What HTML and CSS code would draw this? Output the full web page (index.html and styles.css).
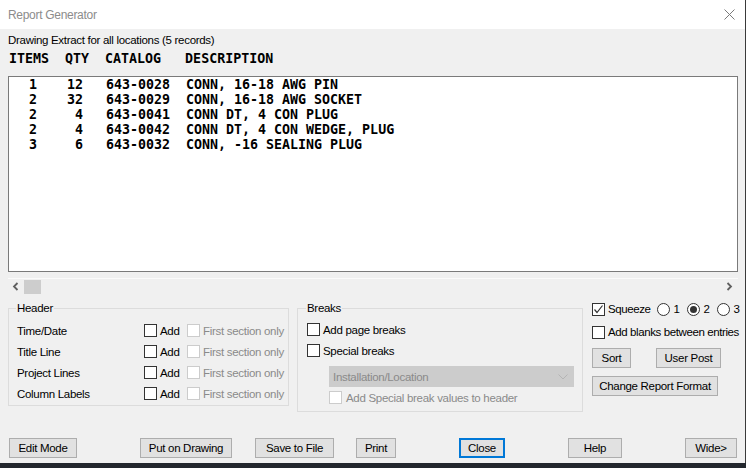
FILE: index.html
```html
<!DOCTYPE html>
<html lang="en">
<head>
    <meta charset="UTF-8">
    <title>Report Generator</title>
    <link rel="stylesheet" href="styles.css">
</head>
<body>
    <div class="window">
        <div class="titlebar">
            <span class="title">Report Generator</span>
            <svg class="close" width="11" height="11" viewBox="0 0 11 11"><path d="M0.5 0.5 L10.5 10.5 M10.5 0.5 L0.5 10.5" stroke="#7a7a7a" stroke-width="1" fill="none"/></svg>
        </div>

        <div class="content">
            <div class="caption">Drawing Extract for all locations (5 records)</div>
            <div class="colheads">ITEMS  QTY  CATALOG   DESCRIPTION</div>

            <div class="listbox">
                <div class="row"><span class="num">1</span><span class="num">12</span><span class="cat">643-0028</span><span>CONN, 16-18 AWG PIN</span></div>
                <div class="row"><span class="num">2</span><span class="num">32</span><span class="cat">643-0029</span><span>CONN, 16-18 AWG SOCKET</span></div>
                <div class="row"><span class="num">2</span><span class="num">4</span><span class="cat">643-0041</span><span>CONN DT, 4 CON PLUG</span></div>
                <div class="row"><span class="num">2</span><span class="num">4</span><span class="cat">643-0042</span><span>CONN DT, 4 CON WEDGE, PLUG</span></div>
                <div class="row"><span class="num">3</span><span class="num">6</span><span class="cat">643-0032</span><span>CONN, -16 SEALING PLUG</span></div>
            </div>

            <div class="hscroll">
                <svg width="8" height="9" viewBox="0 0 8 9"><path d="M5.5 1 L2 4.5 L5.5 8" stroke="#606060" stroke-width="1.8" fill="none"/></svg>
                <div class="thumb"></div>
                <svg class="right" width="8" height="9" viewBox="0 0 8 9"><path d="M2.5 1 L6 4.5 L2.5 8" stroke="#606060" stroke-width="1.8" fill="none"/></svg>
            </div>

            <div class="options">
                <fieldset class="group header-group">
                    <legend>Header</legend>
                    <div class="hrow">
                        <span>Time/Date</span>
                        <label class="check"><span class="box"></span>Add</label>
                        <label class="check disabled"><span class="box"></span>First section only</label>
                    </div>
                    <div class="hrow">
                        <span>Title Line</span>
                        <label class="check"><span class="box"></span>Add</label>
                        <label class="check disabled"><span class="box"></span>First section only</label>
                    </div>
                    <div class="hrow">
                        <span>Project Lines</span>
                        <label class="check"><span class="box"></span>Add</label>
                        <label class="check disabled"><span class="box"></span>First section only</label>
                    </div>
                    <div class="hrow">
                        <span>Column Labels</span>
                        <label class="check"><span class="box"></span>Add</label>
                        <label class="check disabled"><span class="box"></span>First section only</label>
                    </div>
                </fieldset>

                <fieldset class="group breaks-group">
                    <legend>Breaks</legend>
                    <label class="check brow"><span class="box"></span>Add page breaks</label>
                    <label class="check brow"><span class="box"></span>Special breaks</label>
                    <div class="combo">
                        <span>Installation/Location</span>
                        <svg width="10" height="6" viewBox="0 0 10 6"><path d="M0.5 0.5 L5 5 L9.5 0.5" stroke="#b4b4b4" stroke-width="1" fill="none"/></svg>
                    </div>
                    <label class="check disabled special"><span class="box"></span>Add Special break values to header</label>
                </fieldset>

                <div class="side">
                    <div class="squeeze">
                        <label class="check"><span class="box checked"><svg width="11" height="11" viewBox="0 0 11 11"><path d="M1.5 5.5 L4 8.5 L9.5 1.5" stroke="#333" stroke-width="1.2" fill="none"/></svg></span>Squeeze</label>
                        <label class="radio r1"><span class="dot"></span>1</label>
                        <label class="radio"><span class="dot on"></span>2</label>
                        <label class="radio"><span class="dot"></span>3</label>
                    </div>
                    <label class="check blanks"><span class="box"></span>Add blanks between entries</label>
                    <div class="side-buttons">
                        <button class="btn sort">Sort</button>
                        <button class="btn userpost">User Post</button>
                    </div>
                    <button class="btn format">Change Report Format</button>
                </div>
            </div>

            <div class="buttons">
                <button class="btn edit">Edit Mode</button>
                <button class="btn put">Put on Drawing</button>
                <button class="btn save">Save to File</button>
                <button class="btn print">Print</button>
                <button class="btn close-btn">Close</button>
                <button class="btn help">Help</button>
                <button class="btn wide">Wide&gt;</button>
            </div>
        </div>
    </div>
    <div class="taskstrip"></div>
</body>
</html>
```

FILE: styles.css
```css
body {
    margin: 0;
    background: #23272d;
    font-family: 'Liberation Sans', Arial, sans-serif;
    font-size: 11.5px;
    letter-spacing: -0.3px;
    color: #000;
    overflow: hidden;
}

.window {
    width: 745px;
    height: 463px;
    background: #f0f0f0;
    border-right: 1px solid #3a3a3a;
    display: flex;
    flex-direction: column;
}

.titlebar {
    height: 29px;
    background: #ffffff;
    display: flex;
    align-items: center;
    justify-content: space-between;
    padding: 0 10px 0 8px;
    flex-shrink: 0;
}

.title {
    color: #8c8c8c;
    font-size: 12px;
}

.content {
    padding: 0 0 0 8px;
}

.caption {
    margin-top: 4px;
    line-height: 14px;
}

.colheads, .listbox {
    font-family: 'DejaVu Sans Mono', 'Liberation Mono', monospace;
    font-weight: bold;
    font-size: 13.3px;
    letter-spacing: 0;
}

.colheads {
    white-space: pre;
    margin-top: 5px;
    line-height: 14px;
    padding-left: 1px;
}

/* lista de registros */
.listbox {
    margin-top: 10px;
    width: 730px;
    border: 1px solid #7a7a7a;
    background: #ffffff;
    box-sizing: border-box;
    height: 196px;
}

.row {
    display: grid;
    grid-template-columns: 28px 46px 103px 1fr;
    line-height: 15px;
    white-space: pre;
}

.num {
    text-align: right;
}

.cat {
    padding-left: 23px;
}

.hscroll {
    margin-top: 6px;
    height: 16px;
    border-top: 1px solid #fbfbfb;
    display: flex;
    align-items: center;
    padding-left: 4px;
    width: 730px;
    box-sizing: border-box;
}

.thumb {
    width: 17px;
    height: 14px;
    background: #cdcdcd;
    margin-left: 4px;
}

.hscroll .right {
    margin-left: auto;
    margin-right: 5px;
}

.options {
    display: flex;
    margin-top: 7px;
    align-items: flex-start;
}

.group {
    border: 1px solid #dcdcdc;
    margin: 0;
    padding: 0 0 0 8px;
    box-sizing: border-box;
    min-width: 0;
    flex-shrink: 0;
}

.group legend {
    padding: 0 1px;
    margin-left: -1px;
    line-height: 14px;
}

.header-group {
    width: 281px;
    height: 105px;
    padding-top: 5px;
}

.hrow {
    display: grid;
    grid-template-columns: 127px 43px 1fr;
    height: 21px;
    align-items: center;
}

.check {
    display: flex;
    align-items: center;
    white-space: nowrap;
}

.box {
    width: 11px;
    height: 11px;
    border: 1px solid #333333;
    background: #ffffff;
    margin-right: 3px;
    display: flex;
    flex-shrink: 0;
}

.check.disabled {
    color: #8a8a8a;
}

.check.disabled .box {
    border-color: #cccccc;
}

.breaks-group {
    width: 286px;
    height: 111px;
    margin-left: 8px;
    padding: 4px 0 0 9px;
}

.brow {
    height: 21px;
}

.combo {
    margin: 5px 0 0 22px;
    width: 245px;
    height: 21px;
    background: #cccccc;
    border: 1px solid #cccccc;
    box-sizing: border-box;
    display: flex;
    align-items: center;
    justify-content: space-between;
    padding: 0 5px 0 3px;
    color: #8a8a8a;
}

.special {
    margin: 4px 0 0 22px;
}

.special .box {
    margin-right: 4px;
}

.side {
    margin-left: 9px;
    flex-shrink: 0;
    display: flex;
    flex-direction: column;
    align-items: flex-start;
    letter-spacing: -0.4px;
}

.squeeze {
    display: flex;
    align-items: center;
    height: 16px;
}

.radio {
    display: flex;
    align-items: center;
    margin-left: 7px;
}

.radio.r1 {
    margin-left: 6px;
}

.dot {
    width: 11px;
    height: 11px;
    border: 1px solid #333333;
    border-radius: 50%;
    background: #ffffff;
    margin-right: 4px;
    display: flex;
    align-items: center;
    justify-content: center;
}

.dot.on::after {
    content: "";
    width: 7px;
    height: 7px;
    border-radius: 50%;
    background: #333333;
}

.blanks {
    margin-top: 7px;
    height: 16px;
}

.btn {
    font-family: 'Liberation Sans', Arial, sans-serif;
    font-size: 11.5px;
    letter-spacing: -0.3px;
    background: #e1e1e1;
    border: 1px solid #adadad;
    height: 20px;
    padding: 0;
    color: #000;
    box-sizing: border-box;
}

.side-buttons {
    display: flex;
    margin-top: 8px;
}

.sort { width: 39px; }
.userpost { width: 65px; margin-left: 25px; }
.format { width: 126px; margin-top: 8px; }

.buttons {
    display: flex;
    margin-top: 26px;
    padding-left: 1px;
}

.edit { width: 68px; }
.put { width: 92px; margin-left: 63px; }
.save { width: 79px; margin-left: 23px; }
.print { width: 40px; margin-left: 22px; }
.close-btn { width: 46px; margin-left: 63px; border: 2px solid #0078d7; }
.help { width: 54px; margin-left: 63px; }
.wide { width: 52px; margin-left: 63px; }

.taskstrip {
    height: 5px;
}
```
